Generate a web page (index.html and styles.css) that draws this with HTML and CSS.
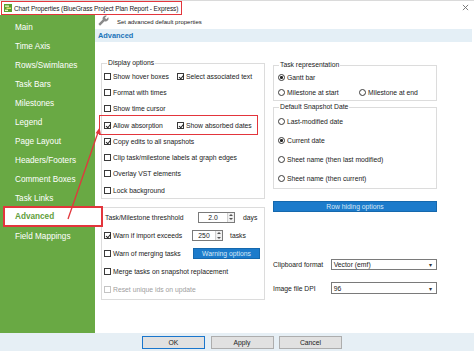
FILE: index.html
```html
<!DOCTYPE html>
<html>
<head>
<meta charset="utf-8">
<title>Chart Properties</title>
<link rel="stylesheet" href="styles.css">
</head>
<body>
<div class="window">
  <div class="titlebar">
    <div class="title-hl">
      <svg class="appicon" viewBox="0 0 8 8" width="8" height="8">
        <rect x="0" y="0" width="8" height="8" fill="#5c9e2e"/>
        <rect x="1" y="1.5" width="4" height="1.3" fill="#e8f5c8"/>
        <rect x="2.5" y="3.6" width="4.5" height="1.3" fill="#f6e27a"/>
        <rect x="1" y="5.7" width="3" height="1.3" fill="#e8f5c8"/>
      </svg>
      <span class="title-text">Chart Properties (BlueGrass Project Plan Report - Express)</span>
    </div>
    <svg class="close" viewBox="0 0 8 8" width="7" height="7">
      <path d="M1 1L7 7M7 1L1 7" stroke="#6b6b6b" stroke-width="1"/>
    </svg>
  </div>

  <div class="main">
    <nav class="sidebar">
      <div class="nav-item">Main</div>
      <div class="nav-item">Time Axis</div>
      <div class="nav-item">Rows/Swimlanes</div>
      <div class="nav-item">Task Bars</div>
      <div class="nav-item">Milestones</div>
      <div class="nav-item">Legend</div>
      <div class="nav-item">Page Layout</div>
      <div class="nav-item">Headers/Footers</div>
      <div class="nav-item">Comment Boxes</div>
      <div class="nav-item">Task Links</div>
      <div class="nav-item active">Advanced</div>
      <div class="nav-item">Field Mappings</div>
    </nav>

    <div class="content">
      <div class="hint">
        <svg class="wrench" viewBox="0 0 24 24" width="11" height="11">
          <path transform="translate(24,0) scale(-1,1)" fill="#8a8a8a" d="M22.7 19l-9.1-9.1c.9-2.3.4-5-1.5-6.9-2-2-5-2.4-7.4-1.3L9 6 6 9 1.6 4.7C.4 7.1.9 10.1 2.9 12.1c1.9 1.9 4.6 2.4 6.9 1.5l9.1 9.1c.4.4 1 .4 1.4 0l2.3-2.3c.5-.4.5-1.1.1-1.4z"/>
        </svg>
        <span>Set advanced default properties</span>
      </div>
      <div class="section-head">Advanced</div>

      <div class="panel">
        <div class="col col-left">
          <fieldset class="group g-display">
            <legend>Display options</legend>
            <div class="row r-disp">
              <label class="opt c1"><span class="cb"></span>Show hover boxes</label>
              <label class="opt"><span class="cb on"></span>Select associated text</label>
            </div>
            <div class="row r-disp"><label class="opt"><span class="cb"></span>Format with times</label></div>
            <div class="row r-disp"><label class="opt"><span class="cb"></span>Show time cursor</label></div>
            <div class="row r-disp hl">
              <label class="opt c1"><span class="cb on"></span>Allow absorption</label>
              <label class="opt"><span class="cb on"></span>Show absorbed dates</label>
            </div>
            <div class="row r-disp"><label class="opt"><span class="cb on"></span>Copy edits to all snapshots</label></div>
            <div class="row r-disp"><label class="opt"><span class="cb"></span>Clip task/milestone labels at graph edges</label></div>
            <div class="row r-disp"><label class="opt"><span class="cb"></span>Overlay VST elements</label></div>
            <div class="row r-disp"><label class="opt"><span class="cb"></span>Lock background</label></div>
          </fieldset>

          <div class="group g-import">
            <div class="row r-imp">
              <span class="lbl l-thresh">Task/Milestone threshhold</span>
              <span class="spin s-days"><span class="spin-val">2.0</span><span class="spin-btn"><i class="up"></i><i class="down"></i></span></span>
              <span class="unit u-days">days</span>
            </div>
            <div class="row r-imp">
              <label class="opt l-warn"><span class="cb on"></span>Warn if import exceeds</label>
              <span class="spin s-tasks"><span class="spin-val">250</span><span class="spin-btn"><i class="up"></i><i class="down"></i></span></span>
              <span class="unit u-tasks">tasks</span>
            </div>
            <div class="row r-imp">
              <label class="opt l-merge"><span class="cb"></span>Warn of merging tasks</label>
              <span class="btn-blue b-warn">Warning options</span>
            </div>
            <div class="row r-imp"><label class="opt"><span class="cb"></span>Merge tasks on snapshot replacement</label></div>
            <div class="row r-imp disabled"><label class="opt"><span class="cb"></span>Reset unique ids on update</label></div>
          </div>
        </div>

        <div class="col col-right">
          <fieldset class="group g-task">
            <legend>Task representation</legend>
            <div class="row r-task"><label class="opt"><span class="rb on"></span>Gantt bar</label></div>
            <div class="row r-task">
              <label class="opt c-ms"><span class="rb"></span>Milestone at start</label>
              <label class="opt"><span class="rb"></span>Milestone at end</label>
            </div>
          </fieldset>

          <fieldset class="group g-snap">
            <legend>Default Snapshot Date</legend>
            <div class="row r-snap"><label class="opt"><span class="rb"></span>Last-modified date</label></div>
            <div class="row r-snap"><label class="opt"><span class="rb on"></span>Current date</label></div>
            <div class="row r-snap"><label class="opt"><span class="rb"></span>Sheet name (then last modified)</label></div>
            <div class="row r-snap"><label class="opt"><span class="rb"></span>Sheet name (then current)</label></div>
          </fieldset>

          <div class="btn-blue b-rows">Row hiding options</div>

          <div class="field f-clip">
            <span class="field-lbl">Clipboard format</span>
            <span class="select"><span>Vector (emf)</span><span class="caret">▾</span></span>
          </div>
          <div class="field f-dpi">
            <span class="field-lbl">Image file DPI</span>
            <span class="select"><span>96</span><span class="caret">▾</span></span>
          </div>
        </div>
      </div>
    </div>
  </div>

  <div class="footer">
    <span class="btn btn-ok">OK</span>
    <span class="btn">Apply</span>
    <span class="btn">Cancel</span>
  </div>

  <svg class="arrow" viewBox="0 0 474 351" width="474" height="351">
    <path d="M68 219L98.5 131" stroke="#e2373d" stroke-width="1.3" fill="none"/>
    <path d="M99.6 127.5L95.6 133.2L100.9 134.6Z" fill="#e2373d"/>
  </svg>
</div>
</body>
</html>
```

FILE: styles.css
```css
* { box-sizing: border-box; margin: 0; padding: 0; }

html, body {
  width: 474px;
  height: 351px;
  overflow: hidden;
  background: #fff;
}

body {
  font-family: "Liberation Sans", Arial, sans-serif;
  font-size: 6.8px;
  color: #222;
}

.window {
  position: relative;
  display: flex;
  flex-direction: column;
  height: 351px;
}

/* ---------- title bar ---------- */
.titlebar {
  height: 15px;
  flex: none;
  display: flex;
  align-items: flex-start;
  justify-content: space-between;
  background: #fff;
  border-top: 1px solid #dadada;
}

.title-hl {
  margin-left: 1px;
  width: 181px;
  height: 14px;
  border: 1.5px solid #e3353c;
  display: flex;
  align-items: center;
  padding-left: 2px;
  gap: 2px;
}

.appicon { flex: none; }

.title-text {
  font-size: 6.5px;
  letter-spacing: -0.12px;
  color: #1a1a1a;
  white-space: nowrap;
}

.close {
  margin: 3px 5px 0 0;
}

/* ---------- main ---------- */
.main {
  flex: none;
  height: 318px;
  display: flex;
}

.sidebar {
  flex: none;
  width: 95px;
  background: #69a944;
  padding-top: 2.5px;
}

.nav-item {
  height: 19.1px;
  display: flex;
  align-items: center;
  padding-left: 15px;
  color: #fff;
  font-size: 8.2px;
  white-space: nowrap;
}

.nav-item.active {
  position: relative;
  z-index: 2;
  width: 100px;
  height: 21px;
  margin: -2px 0 0 3px;
  padding-left: 10px;
  background: #fff;
  border: 2px solid #e3353c;
  color: #5f9e3b;
  font-weight: bold;
}

.content {
  flex: 1;
  display: flex;
  flex-direction: column;
  padding-right: 2px;
}

.hint {
  height: 14px;
  display: flex;
  align-items: center;
  padding-left: 3px;
  font-size: 6px;
  color: #222;
}

.wrench { margin-right: 8px; margin-top: -3px; }

.section-head {
  height: 13px;
  background: #e4eff6;
  color: #1c74b9;
  font-weight: bold;
  font-size: 7.4px;
  display: flex;
  align-items: center;
  padding-left: 3px;
}

.panel {
  display: grid;
  grid-template-columns: 164px 164px;
  column-gap: 8px;
  padding: 16px 0 0 6px;
}

.col { display: flex; flex-direction: column; }

/* ---------- group boxes ---------- */
.group {
  border: 1px solid #dcdcdc;
  min-width: 0;
}

fieldset.group { padding: 0 2px; }

legend {
  line-height: 10px;
  height: 10px;
  padding: 0 1px;
  margin-left: 3px;
  color: #222;
}

.row {
  display: flex;
  align-items: center;
  white-space: nowrap;
}

.r-disp { height: 16.3px; }
.r-imp { height: 18.2px; }
.r-task { height: 15px; padding-left: 2px; }
.r-snap { height: 19px; padding-left: 2px; }

.opt {
  display: flex;
  align-items: center;
  gap: 2px;
}

.c1 { width: 73px; }

.g-import {
  margin-top: 7.6px;
  padding: 0 2px;
}

.col-right { padding-top: 2px; }
.g-snap { margin-top: 1px; }
.c-ms { width: 81px; }

/* ---------- checkboxes & radios ---------- */
.cb {
  position: relative;
  flex: none;
  width: 7px;
  height: 7px;
  border: 1px solid #3a3a3a;
  background: #fff;
}

.cb.on::after {
  content: "";
  position: absolute;
  left: 1.6px;
  top: 0;
  width: 2px;
  height: 3.6px;
  border-right: 1px solid #222;
  border-bottom: 1px solid #222;
  transform: rotate(40deg);
}

.rb {
  position: relative;
  flex: none;
  width: 7px;
  height: 7px;
  border: 1px solid #3a3a3a;
  border-radius: 50%;
  background: #fff;
}

.rb.on::after {
  content: "";
  position: absolute;
  left: 1.2px;
  top: 1.2px;
  width: 2.6px;
  height: 2.6px;
  border-radius: 50%;
  background: #222;
}

.disabled { color: #a0a0a0; }
.disabled .cb { border-color: #c4c4c4; }

/* annotation box */
.hl { position: relative; }
.hl::after {
  content: "";
  position: absolute;
  left: -5px;
  top: -2px;
  width: 157px;
  height: 18px;
  border: 1.5px solid #e3353c;
}

/* ---------- import box widgets ---------- */
.l-thresh { width: 93px; margin-left: 1px; }
.l-warn { width: 88px; }
.l-merge { width: 89px; }

.spin {
  display: flex;
  height: 11px;
  border: 1px solid #7a7a7a;
  background: #fff;
}

.s-days { width: 37px; }
.s-tasks { width: 31px; }

.spin-val {
  flex: 1;
  display: flex;
  align-items: center;
  justify-content: center;
}

.spin-btn {
  width: 7px;
  display: flex;
  flex-direction: column;
  background: #f0f0f0;
  border-left: 1px solid #d0d0d0;
}

.spin-btn i {
  flex: 1;
  display: flex;
  align-items: center;
  justify-content: center;
}

.spin-btn i::before {
  content: "";
  border-left: 2px solid transparent;
  border-right: 2px solid transparent;
}

.spin-btn .up::before { border-bottom: 2px solid #555; }
.spin-btn .down::before { border-top: 2px solid #555; }

.u-days { margin-left: 8px; }
.u-tasks { margin-left: 7px; }

.btn-blue {
  background: #1c7bcb;
  color: #d8e9f7;
  display: flex;
  align-items: center;
  justify-content: center;
  height: 11px;
  border: 1px solid #1568ad;
}

.b-warn { width: 67px; }
.b-rows { margin-top: 12px; width: 164px; }

/* ---------- selects ---------- */
.field {
  display: flex;
  align-items: center;
}

.f-clip { margin-top: 47px; height: 11px; }
.f-dpi { margin-top: 12px; height: 12px; }

.field-lbl { width: 58px; }

.select {
  width: 107px;
  height: 100%;
  border: 1px solid #7a7a7a;
  background: #fff;
  display: flex;
  align-items: center;
  justify-content: space-between;
  padding: 0 4px 0 2px;
}

.caret { font-size: 6px; color: #333; }

/* ---------- footer ---------- */
.footer {
  flex: none;
  height: 18px;
  background: #e6eff5;
  display: flex;
  align-items: center;
  gap: 5.5px;
  padding-left: 142px;
  padding-top: 1px;
}

.btn {
  width: 63px;
  height: 13px;
  background: #e1e1e1;
  border: 1px solid #adadad;
  display: flex;
  align-items: center;
  justify-content: center;
  color: #222;
}

.btn-ok { border-color: #1a76cc; }

/* ---------- annotation arrow ---------- */
.arrow {
  position: absolute;
  left: 0;
  top: 0;
  z-index: 3;
  pointer-events: none;
}
```
